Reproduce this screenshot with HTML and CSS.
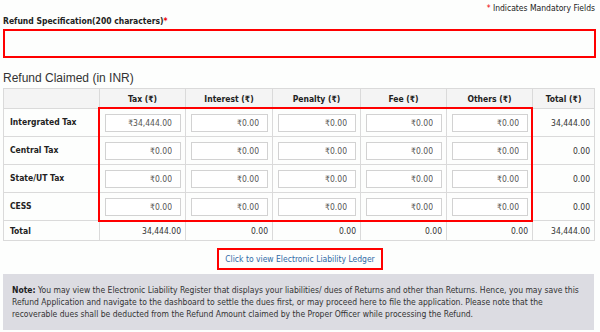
FILE: index.html
```html
<!DOCTYPE html>
<html lang="en">

<head>
    <meta charset="UTF-8">
    <title>Refund</title>
    <link rel="stylesheet" href="styles.css">
</head>

<body>

    <div class="mandatory"><span class="star">*</span> Indicates Mandatory Fields</div>

    <div class="form-group">
        <label class="spec-label" for="spec">Refund Specification(200 characters)<span class="star">*</span></label>
        <textarea id="spec" class="spec-box"></textarea>
    </div>

    <h4 class="section-title">Refund Claimed (in INR)</h4>

    <div class="table-wrap">
        <table class="refund-table">
            <colgroup>
                <col style="width: 96px">
                <col style="width: 86px">
                <col style="width: 87px">
                <col style="width: 88px">
                <col style="width: 86px">
                <col style="width: 86px">
                <col>
            </colgroup>
            <thead>
                <tr>
                    <th></th>
                    <th>Tax (₹)</th>
                    <th>Interest (₹)</th>
                    <th>Penalty (₹)</th>
                    <th>Fee (₹)</th>
                    <th>Others (₹)</th>
                    <th>Total (₹)</th>
                </tr>
            </thead>
            <tbody>
                <tr>
                    <td class="row-label">Intergrated Tax</td>
                    <td><input type="text" value="₹34,444.00"></td>
                    <td><input type="text" value="₹0.00"></td>
                    <td><input type="text" value="₹0.00"></td>
                    <td><input type="text" value="₹0.00"></td>
                    <td><input type="text" value="₹0.00"></td>
                    <td class="num">34,444.00</td>
                </tr>
                <tr>
                    <td class="row-label">Central Tax</td>
                    <td><input type="text" value="₹0.00"></td>
                    <td><input type="text" value="₹0.00"></td>
                    <td><input type="text" value="₹0.00"></td>
                    <td><input type="text" value="₹0.00"></td>
                    <td><input type="text" value="₹0.00"></td>
                    <td class="num">0.00</td>
                </tr>
                <tr>
                    <td class="row-label">State/UT Tax</td>
                    <td><input type="text" value="₹0.00"></td>
                    <td><input type="text" value="₹0.00"></td>
                    <td><input type="text" value="₹0.00"></td>
                    <td><input type="text" value="₹0.00"></td>
                    <td><input type="text" value="₹0.00"></td>
                    <td class="num">0.00</td>
                </tr>
                <tr>
                    <td class="row-label">CESS</td>
                    <td><input type="text" value="₹0.00"></td>
                    <td><input type="text" value="₹0.00"></td>
                    <td><input type="text" value="₹0.00"></td>
                    <td><input type="text" value="₹0.00"></td>
                    <td><input type="text" value="₹0.00"></td>
                    <td class="num">0.00</td>
                </tr>
                <tr class="total-row">
                    <td class="row-label">Total</td>
                    <td class="num">34,444.00</td>
                    <td class="num">0.00</td>
                    <td class="num">0.00</td>
                    <td class="num">0.00</td>
                    <td class="num">0.00</td>
                    <td class="num">34,444.00</td>
                </tr>
            </tbody>
        </table>
        <!-- Markierung um die Eingabefelder -->
        <div class="highlight"></div>
    </div>

    <div class="ledger">
        <a href="#" class="ledger-link">Click to view Electronic Liability Ledger</a>
    </div>

    <div class="note">
        <p><b>Note:</b> You may view the Electronic Liability Register that displays your liabilities/ dues of Returns and other than Returns. Hence, you may save this Refund Application and navigate to the dashboard to settle the dues first, or may proceed here to file the application. Please note that the recoverable dues shall be deducted from the Refund Amount claimed by the Proper Officer while processing the Refund.</p>
    </div>

</body>

</html>
```

FILE: styles.css
```css
* {
    margin: 0;
    padding: 0;
    box-sizing: border-box;
}

body {
    background: #fdfefd;
    font-family: 'DejaVu Sans Condensed', 'DejaVu Sans', Verdana, sans-serif;
    font-stretch: condensed;
    font-size: 8.5px;
    color: #222;
    padding: 0 3px;
    width: 600px;
}

.star {
    color: #e00;
}

.mandatory {
    text-align: right;
    padding: 3px 2px 0 0;
    height: 14px;
    line-height: 11px;
}

.form-group {
    margin-top: 2px;
}

.spec-label {
    display: block;
    font-weight: bold;
    line-height: 11px;
    margin-bottom: 2px;
}

.spec-box {
    display: block;
    width: 593px;
    height: 29px;
    border: 2px solid #f00;
    background: transparent;
    resize: none;
    outline: none;
}

.section-title {
    font-family: 'Liberation Sans', Arial, sans-serif;
    font-stretch: normal;
    font-weight: normal;
    font-size: 12px;
    color: #333;
    margin-top: 13px;
    line-height: 14px;
    height: 17px;
}

.table-wrap {
    position: relative;
    width: 592px;
}

.refund-table {
    width: 592px;
    border-collapse: collapse;
    table-layout: fixed;
}

.refund-table th,
.refund-table td {
    border: 1px solid #dadada;
}

.refund-table th {
    background: #f4f4f4;
    height: 20px;
    font-weight: bold;
    text-align: center;
    color: #222;
}

.refund-table td {
    height: 28px;
    padding: 0 4px 0 5px;
}

.refund-table .row-label {
    font-weight: bold;
    vertical-align: top;
    padding-top: 8px;
    padding-left: 6px;
}

.refund-table .num {
    text-align: right;
    color: #333;
}

.refund-table .total-row td {
    height: 20px;
    padding-top: 0;
    vertical-align: middle;
}

.refund-table input {
    display: block;
    width: 100%;
    height: 18px;
    border: 1px solid #d2d2d2;
    background: #fff;
    text-align: right;
    font-family: inherit;
    font-stretch: inherit;
    font-size: 8.5px;
    color: #555;
    padding: 0 8px;
}

.highlight {
    position: absolute;
    left: 95px;
    top: 19px;
    width: 435px;
    height: 115px;
    border: 2px solid #f00;
    pointer-events: none;
}

.ledger {
    display: flex;
    justify-content: center;
    margin: 7px 0 4px;
}

.ledger-link {
    display: block;
    border: 2px solid #f00;
    padding: 3px 6px;
    line-height: 12px;
    color: #2f6aa6;
    text-decoration: none;
}

.note {
    background: #dcdce2;
    width: 591px;
    height: 56px;
    padding: 10px 9px 0 9px;
    color: #333;
}

.note p {
    line-height: 12px;
}

.note b {
    color: #222;
}
```
